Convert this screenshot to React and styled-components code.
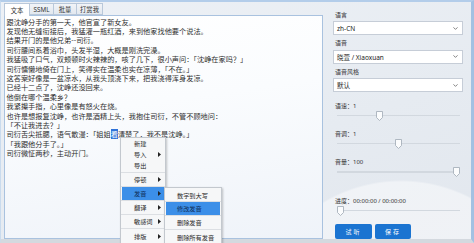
import React from 'react'
import styled, { createGlobalStyle } from 'styled-components'
import { ChevronDown } from 'lucide-react'

const GlobalStyle = createGlobalStyle`
  html, body {
    margin: 0;
    padding: 0;
  }
  body {
    width: 474px;
    height: 243px;
    overflow: hidden;
    font-family: "Noto Sans", "Noto Sans CJK SC", sans-serif;
    color: #2b2b2b;
  }
`

const Window = styled.div`
  position: relative;
  box-sizing: border-box;
  width: 474px;
  height: 243px;
  display: flex;
  border-top: 2px solid #b3cdea;
  border-left: 1px solid #c9dbee;
  border-right: 3px solid #a3c1e2;
  border-bottom: 4px solid #d4d9df;
  background:
    radial-gradient(circle at 400px 330px, rgba(255,255,255,0.45) 0 150px, rgba(255,255,255,0) 152px),
    linear-gradient(160deg, #edf1f6 0%, #e6ebf1 60%, #e2e7ee 100%);
`

const LeftPane = styled.div`
  display: flex;
  flex-direction: column;
  width: 319px;
  margin-left: 3px;
`

const TabBar = styled.div`
  display: flex;
  align-items: flex-end;
  height: 13px;
`

const Tab = styled.div`
  box-sizing: border-box;
  width: ${p => p.$w}px;
  height: ${p => (p.$active ? 13 : 12)}px;
  margin-bottom: ${p => (p.$active ? -1 : 0)}px;
  display: flex;
  align-items: center;
  justify-content: center;
  font-size: 6.3px;
  color: #333;
  background: ${p => (p.$active ? '#ffffff' : 'linear-gradient(#f1f4f8, #e2e8ef)')};
  border: 1px solid #b9c8da;
  border-bottom: ${p => (p.$active ? 'none' : '1px solid #b9c8da')};
  margin-right: -1px;
  position: relative;
  z-index: ${p => (p.$active ? 1 : 0)};
`

const Editor = styled.div`
  flex: 1;
  box-sizing: border-box;
  border: 1px solid #a9c2df;
  padding: 1.5px 0 0 1.5px;
  background: linear-gradient(172deg, #ffffff 0%, #fafcfe 40%, #eff3f9 100%);
  font-family: "Noto Sans CJK SC", "Noto Sans", sans-serif;
  font-size: 7.2px;
  line-height: 9.4px;
  color: #2e2e2e;
  white-space: nowrap;
`

const Line = styled.div``

const Selected = styled.span`
  background: #2f72d8;
  color: #fff;
`

const RightPane = styled.div`
  display: flex;
  flex-direction: column;
  width: 130px;
  margin-left: 10px;
  padding-top: 8.5px;
`

const Label = styled.div`
  font-family: "Noto Sans", "Noto Sans CJK SC", sans-serif;
  font-size: 6px;
  line-height: 9px;
  height: 9px;
  padding-left: 2px;
  margin-top: ${p => p.$mt || 0}px;
  color: #333;
`

const Select = styled.div`
  box-sizing: border-box;
  height: 14px;
  margin-top: 1.5px;
  display: flex;
  align-items: center;
  justify-content: space-between;
  padding: 0 3px 0 3px;
  background: #ffffff;
  border: 1px solid #c6cdd7;
  font-size: 6.5px;
  color: #222;
`

const SliderWrap = styled.div`
  position: relative;
  height: 10px;
  margin: ${p => p.$mt || 0}px 3px 0 4px;
`

const Track = styled.div`
  position: absolute;
  left: 0;
  right: 0;
  top: 4px;
  height: 1.5px;
  background: #d2d8df;
`

const Thumb = styled.svg`
  position: absolute;
  top: 0;
  width: 7px;
  height: 10px;
`

const ButtonRow = styled.div`
  display: flex;
  gap: 3px;
  margin-top: 8px;
  padding-left: 2px;
`

const Button = styled.div`
  width: ${p => p.$w}px;
  height: 15px;
  border-radius: 2px;
  background: #1b74d1;
  color: #fff;
  font-size: 6px;
  letter-spacing: 2px;
  display: flex;
  align-items: center;
  justify-content: center;
`

const Menu = styled.div`
  position: absolute;
  left: ${p => p.$x}px;
  top: ${p => p.$y}px;
  width: ${p => p.$w}px;
  box-sizing: border-box;
  padding-top: ${p => p.$pt || 0}px;
  background: #f6f7f8;
  border: 1px solid #c3c8ce;
  box-shadow: 1px 1px 2px rgba(0, 0, 0, 0.22);
  z-index: ${p => p.$z || 5};
`

const Item = styled.div`
  position: relative;
  height: ${p => p.$h}px;
  border-top: ${p => (p.$sep ? '1px solid #dcdfe3' : 'none')};
  margin-top: ${p => p.$mt || 0}px;
`

const ItemInner = styled.div`
  height: 100%;
  margin: 0 1px;
  display: flex;
  align-items: center;
  padding-left: ${p => p.$pl}px;
  padding-right: 3px;
  font-family: "Noto Sans CJK SC", sans-serif;
  font-size: 6.2px;
  color: ${p => (p.$hl ? '#0e2c57' : '#2a2a2a')};
  background: ${p => (p.$hl ? '#3c8fe8' : 'transparent')};
`

const ArrowIcon = styled.svg`
  margin-left: auto;
  width: 3px;
  height: 5px;
`

const lines = [
  '跟沈峥分手的第一天，他官宣了新女友。',
  '发现他无缝衔接后，我猛灌一瓶红酒，来到他家找他要个说法。',
  '结果开门的是他兄弟--司衍。',
  '司衍腰间系着浴巾，头发半湿，大概是刚洗完澡。',
  '我猛吸了口气，双颊顿时火辣辣的，咳了几下，很小声问：「沈峥在家吗？」',
  '司衍慵懒地倚在门上，笑得实在温柔也实在凉薄，「不在。」',
  '这答案好像是一盆凉水，从我头顶浇下来，把我浇得浑身发凉。',
  '已经十二点了，沈峥还没回来。',
  '他倒在哪个温柔乡？',
  '我紧攥手指，心里像是有怒火在烧。',
  '也许是想报复沈峥，也许是酒精上头，我抱住司衍，不管不顾地问：',
  '「不让我进去？」',
  null,
  '「我跟他分手了。」',
  '司衍微怔两秒，主动开门。',
]

const sliders = [
  { label: '语速：1', pct: 33.3, mt: 9.5 },
  { label: '音调：1', pct: 50, mt: 9 },
  { label: '音量：100', pct: 100, mt: 9.5 },
  { label: '进度：00:00:00 / 00:00:00', pct: 0, mt: 19.5 },
]

const mainMenu = [
  { t: '新建', h: 11 },
  { t: '导入', h: 11, sub: true },
  { t: '导出', h: 11 },
  { t: '停顿', h: 13, sub: true, sep: true, mt: 1 },
  { t: '发音', h: 13, sub: true, sep: true, hl: true },
  { t: '翻译', h: 13, sub: true, sep: true },
  { t: '敏感词', h: 13, sub: true, sep: true },
  { t: '排版', h: 14, sub: true, sep: true },
]

const subMenu = [
  { t: '数字到大写', h: 12 },
  { t: '修改发音', h: 13, sep: true, hl: true },
  { t: '删除发音', h: 13, sep: true },
  { t: '删除所有发音', h: 14, sep: true },
]

function Slider({ pct }) {
  const track = 123
  return (
    <SliderWrap>
      <Track />
      <Thumb viewBox="0 0 7 10" style={{ left: (pct / 100) * (track - 7) }}>
        <path d="M0.5 0.5 H6.5 V6.5 L3.5 9.5 L0.5 6.5 Z" fill="#fbfcfd" stroke="#9ea8b4" strokeWidth="0.8" />
      </Thumb>
    </SliderWrap>
  )
}

function MenuList({ items, pl }) {
  return items.map((it, i) => (
    <Item key={i} $h={it.h} $sep={it.sep} $mt={it.mt}>
      <ItemInner $pl={pl} $hl={it.hl}>
        {it.t}
        {it.sub && (
          <ArrowIcon viewBox="0 0 3 5">
            <path d="M0 0 L3 2.5 L0 5 Z" fill="#222" />
          </ArrowIcon>
        )}
      </ItemInner>
    </Item>
  ))
}

export default function App() {
  return (
    <>
      <GlobalStyle />
      <Window>
        <LeftPane>
          <TabBar>
            <Tab $w={26} $active>文本</Tab>
            <Tab $w={25}>SSML</Tab>
            <Tab $w={24}>批量</Tab>
            <Tab $w={27}>打赏我</Tab>
          </TabBar>
          <Editor>
            {lines.map((l, i) =>
              l === null ? (
                <Line key={i}>
                  司衍舌尖抵腮，语气散漫：「姐姐<Selected>看</Selected>清楚了，我不是沈峥。」
                </Line>
              ) : (
                <Line key={i}>{l}</Line>
              )
            )}
          </Editor>
        </LeftPane>

        <RightPane>
          <Label>语言</Label>
          <Select>
            zh-CN
            <ChevronDown size={7} strokeWidth={2.5} color="#555" />
          </Select>
          <Label $mt={4}>语音</Label>
          <Select>
            晓萱 / Xiaoxuan
            <ChevronDown size={7} strokeWidth={2.5} color="#555" />
          </Select>
          <Label $mt={4}>语音风格</Label>
          <Select>
            默认
            <ChevronDown size={7} strokeWidth={2.5} color="#555" />
          </Select>

          {sliders.map((s, i) => (
            <React.Fragment key={i}>
              <Label $mt={s.mt}>{s.label}</Label>
              <Slider pct={s.pct} />
            </React.Fragment>
          ))}

          <ButtonRow>
            <Button $w={37}>试听</Button>
            <Button $w={36}>保存</Button>
          </ButtonRow>
        </RightPane>

        <Menu $x={119} $y={135} $w={46}>
          <MenuList items={mainMenu} pl={12} />
        </Menu>
        <Menu $x={163} $y={185} $w={58} $pt={1} $z={6}>
          <MenuList items={subMenu} pl={11} />
        </Menu>
      </Window>
    </>
  )
}
